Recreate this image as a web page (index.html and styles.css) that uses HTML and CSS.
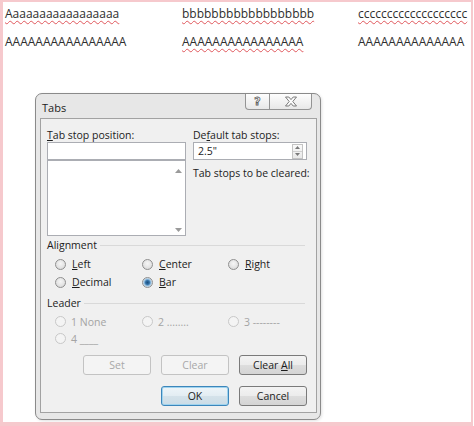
FILE: index.html
```html
<!DOCTYPE html>
<html>
<head>
<meta charset="utf-8">
<link rel="stylesheet" href="styles.css">
</head>
<body>
<div class="page">
  <div class="doc-row first">
    <span class="cell"><span class="sq">Aaaaaaaaaaaaaaaaa</span></span>
    <span class="cell"><span class="sq">bbbbbbbbbbbbbbbbbb</span></span>
    <span class="cell"><span class="sq">ccccccccccccccccccc</span></span>
  </div>
  <div class="doc-row second">
    <span class="cell">AAAAAAAAAAAAAAAA</span>
    <span class="cell"><span class="sq">AAAAAAAAAAAAAAAA</span></span>
    <span class="cell">AAAAAAAAAAAAAA</span>
  </div>

  <div class="dialog">
    <div class="titlebar">
      <span class="title">Tabs</span>
      <div class="caps">
        <span class="cap help">?</span>
        <span class="cap close">
          <svg width="14" height="11" viewBox="0 0 14 11">
            <polygon points="1.5,1 4.8,1 7,3.6 9.2,1 12.5,1 8.8,5.5 12.5,10 9.2,10 7,7.4 4.8,10 1.5,10 5.2,5.5" fill="#fbfbfb" stroke="#6d6d6d" stroke-width="0.9" stroke-linejoin="round"/>
          </svg>
        </span>
      </div>
    </div>
    <div class="client">
      <div class="top">
        <div class="col">
          <div class="lbl"><u>T</u>ab stop position:</div>
          <div class="input"></div>
          <div class="listbox">
            <div class="scroll">
              <svg width="7" height="4" viewBox="0 0 7 4"><polygon points="0,4 3.5,0 7,4" fill="#9a9a9a"/></svg>
              <svg width="7" height="4" viewBox="0 0 7 4"><polygon points="0,0 3.5,4 7,0" fill="#9a9a9a"/></svg>
            </div>
          </div>
        </div>
        <div class="col">
          <div class="lbl">De<u>f</u>ault tab stops:</div>
          <div class="input spin">
            <span class="val">2.5"</span>
            <div class="spinbtns">
              <span class="sb"><svg width="5" height="3" viewBox="0 0 5 3"><polygon points="0,3 2.5,0 5,3" fill="#7a7a7a"/></svg></span>
              <span class="sb"><svg width="5" height="3" viewBox="0 0 5 3"><polygon points="0,0 2.5,3 5,0" fill="#7a7a7a"/></svg></span>
            </div>
          </div>
          <div class="lbl cleared">Tab stops to be cleared:</div>
        </div>
      </div>

      <div class="group-h align-h">Alignment</div>
      <div class="radios">
        <label class="ritem"><span class="radio"></span><span><u>L</u>eft</span></label>
        <label class="ritem"><span class="radio"></span><span><u>C</u>enter</span></label>
        <label class="ritem"><span class="radio"></span><span><u>R</u>ight</span></label>
        <label class="ritem"><span class="radio"></span><span><u>D</u>ecimal</span></label>
        <label class="ritem"><span class="radio checked"></span><span><u>B</u>ar</span></label>
      </div>

      <div class="group-h leader-h">Leader</div>
      <div class="radios disabled">
        <label class="ritem"><span class="radio"></span><span>1 None</span></label>
        <label class="ritem"><span class="radio"></span><span>2 ........</span></label>
        <label class="ritem"><span class="radio"></span><span>3 --------</span></label>
        <label class="ritem"><span class="radio"></span><span>4 ____</span></label>
      </div>

      <div class="btnrow first-btns">
        <span class="btn dis"><span>Set</span></span>
        <span class="btn dis"><span>Clear</span></span>
        <span class="btn"><span>Clear <u>A</u>ll</span></span>
      </div>
      <div class="btnrow second-btns">
        <span class="btn default"><span>OK</span></span>
        <span class="btn"><span>Cancel</span></span>
      </div>
    </div>
  </div>
</div>
</body>
</html>
```

FILE: styles.css
```css
html, body {
  margin: 0;
  padding: 0;
  background: #ffffff;
}

body {
  font-family: "Open Sans", "Noto Sans", sans-serif;
}

.page {
  width: 473px;
  height: 426px;
  box-sizing: border-box;
  border-style: solid;
  border-color: #f6c9cd;
  border-width: 2px 2px 4px 3px;
  background: #ffffff;
  overflow: hidden;
}

.doc-row {
  display: grid;
  grid-template-columns: 177px 176px 1fr;
  padding-left: 2px;
  font-size: 12px;
  line-height: 16px;
  color: #2e2e2e;
  white-space: nowrap;
}

.doc-row.first {
  padding-top: 4px;
}

.doc-row.second {
  margin-top: 12px;
}

.sq {
  text-decoration-line: underline;
  text-decoration-style: wavy;
  text-decoration-color: #e0575c;
  text-decoration-thickness: 1.3px;
  text-underline-offset: 2px;
  text-decoration-skip-ink: none;
}

/* dialog */
.dialog {
  margin: 43px 0 0 32px;
  width: 286px;
  height: 327px;
  box-sizing: border-box;
  border: 1px solid #8a8a8a;
  border-radius: 7px;
  background: #e7e7e7;
  padding: 0 3px 6px 4px;
  display: flex;
  flex-direction: column;
  box-shadow: 1px 1px 3px rgba(0, 0, 0, 0.12);
  color: #1c1c1c;
}

.titlebar {
  height: 24px;
  display: flex;
  justify-content: space-between;
  align-items: flex-start;
}

.title {
  align-self: flex-end;
  padding: 0 0 3px 2px;
  font-size: 11px;
  line-height: 14px;
  color: #222222;
}

.caps {
  display: flex;
  margin-right: 5px;
}

.cap {
  height: 16px;
  box-sizing: border-box;
  border: 1px solid #949494;
  border-top: none;
  background: linear-gradient(#fdfdfd, #e8e8e8);
  display: flex;
  align-items: center;
  justify-content: center;
}

.cap.help {
  width: 25px;
  border-radius: 0 0 0 4px;
  font-family: "DejaVu Sans", sans-serif;
  font-weight: bold;
  font-size: 11px;
  line-height: 14px;
  color: #ffffff;
  -webkit-text-stroke: 0.8px #606060;
}

.cap.close {
  width: 42px;
  border-left: none;
  border-radius: 0 0 4px 0;
}

.client {
  flex: 1;
  border: 1px solid #a2a2a2;
  background: #f0f0f0;
  padding: 9px 9px 6px 6px;
  display: flex;
  flex-direction: column;
  font-size: 10.5px;
}

.top {
  display: grid;
  grid-template-columns: 139px 114px;
  column-gap: 7px;
}

.lbl {
  line-height: 14px;
  height: 14px;
  white-space: nowrap;
}

.input {
  height: 18px;
  box-sizing: border-box;
  border: 1px solid #abadb3;
  background: #ffffff;
}

.listbox {
  height: 76px;
  box-sizing: border-box;
  border: 1px solid #abadb3;
  background: #ffffff;
  display: flex;
  justify-content: flex-end;
}

.scroll {
  width: 13px;
  display: flex;
  flex-direction: column;
  justify-content: space-between;
  align-items: center;
  padding: 8px 0 3px;
}

.spin {
  display: flex;
  align-items: center;
  justify-content: space-between;
  padding: 0 3px 0 4px;
}

.val {
  font-size: 10.5px;
  line-height: 14px;
}

.spinbtns {
  display: flex;
  flex-direction: column;
  width: 11px;
  height: 15px;
  box-sizing: border-box;
  border: 1px solid #c4c4c4;
  background: linear-gradient(#fafafa, #e9e9e9);
}

.sb {
  flex: 1;
  display: flex;
  align-items: center;
  justify-content: center;
}

.sb + .sb {
  border-top: 1px solid #d0d0d0;
}

.cleared {
  margin-top: 6px;
}

.group-h {
  display: flex;
  align-items: center;
  line-height: 14px;
  height: 14px;
  margin-right: 2px;
}

.group-h::after {
  content: "";
  flex: 1;
  border-top: 1px solid #d9d9d9;
  margin-left: 3px;
}

.align-h {
  margin-top: 2px;
}

.leader-h {
  margin-top: 5px;
}

.radios {
  display: grid;
  grid-template-columns: 87px 86px 1fr;
  grid-auto-rows: 18px;
  padding-left: 8px;
  margin-top: 3px;
}

.radios.disabled {
  grid-auto-rows: 17px;
  color: #a4a4a4;
}

.ritem {
  display: flex;
  align-items: center;
  white-space: nowrap;
}

.radio {
  width: 11px;
  height: 11px;
  box-sizing: border-box;
  border-radius: 50%;
  border: 1px solid #8f8f8f;
  background: radial-gradient(circle at 50% 40%, #f6f6f6 0%, #e2e2e2 60%, #cfcfcf 100%);
  margin-right: 6px;
  flex: none;
}

.radio.checked {
  background: radial-gradient(circle, #1d4f7e 0%, #2f6fa6 30%, #9fc7e6 55%, #e2e2e2 75%);
}

.disabled .radio {
  border-color: #c8c8c8;
  background: #f4f4f4;
  margin-right: 5px;
}

.btnrow {
  display: flex;
  justify-content: flex-end;
  gap: 10px;
}

.first-btns {
  margin-top: 8px;
}

.second-btns {
  margin-top: 11px;
}

.btn {
  width: 68px;
  height: 20px;
  box-sizing: border-box;
  border: 1px solid #7a7a7a;
  border-radius: 3px;
  background: linear-gradient(#f3f3f3 0%, #ececec 48%, #dddddd 52%, #d4d4d4 100%);
  display: flex;
  align-items: center;
  justify-content: center;
  line-height: 14px;
  white-space: nowrap;
}

.btn.dis {
  border-color: #c3c3c3;
  background: #f4f4f4;
  color: #a8a8a8;
}

.btn.default {
  border-color: #3c86bb;
  box-shadow: inset 0 0 0 1px #9fd3ee;
  background: linear-gradient(#eef5f9 0%, #e3edf3 48%, #d4e2ea 52%, #cbdce6 100%);
}
```
